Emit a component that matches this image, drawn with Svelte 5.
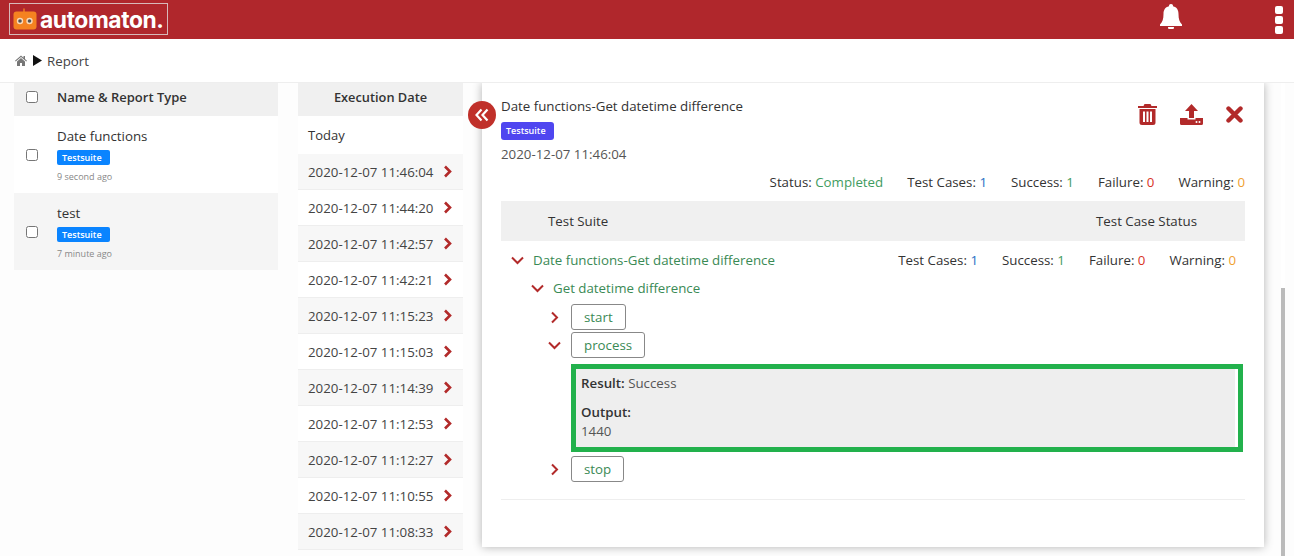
<script>
  const dates = ['11:46:04','11:44:20','11:42:57','11:42:21','11:15:23','11:15:03','11:14:39','11:12:53','11:12:27','11:10:55','11:08:33'];
  const reports = [
    { name: 'Date functions', ago: '9 second ago' },
    { name: 'test', ago: '7 minute ago' }
  ];
</script>

<svelte:head><title>Report</title></svelte:head>

<div class="page">
  <header class="top">
    <div class="logo">
      <svg width="24" height="22" viewBox="0 0 24 22">
        <path d="M11 5 L11 .5" stroke="#f58220" stroke-width="1.400"/>
        <rect x="0.500" y="3.500" width="23" height="18" rx="3" fill="#f58220"/>
        <circle cx="7" cy="13" r="3.200" fill="#f9d9b8"/><circle cx="7" cy="13" r="1.800" fill="#555"/>
        <circle cx="16.500" cy="13" r="3.200" fill="#f9d9b8"/><circle cx="16.500" cy="13" r="1.800" fill="#555"/>
      </svg>
      <span>automaton.</span>
    </div>
    <svg class="bell" width="24" height="25" viewBox="0 0 24 25"><path fill="#fff" d="M12 0a2 2 0 0 1 2 2.300c4 .9 5.500 4 5.500 7.700 0 5 1 8 3.500 10.500V22H1v-1.500C3.500 18 4.500 15 4.500 10c0-3.700 1.500-6.800 5.500-7.700A2 2 0 0 1 12 0zM9 23h6a3 3 0 0 1-6 0z"/></svg>
    <div class="dots"><i></i><i></i><i></i></div>
  </header>

  <nav class="crumb">
    <svg width="12" height="11" viewBox="0 0 12 11"><path fill="#777" d="M6 .5 0 5.800l.7.700L6 2l5.300 4.500.7-.7-2-1.800V1H8.500v1.700zM2 6.500V11h3V8h2v3h3V6.500L6 3z"/></svg>
    <svg width="9" height="11" viewBox="0 0 9 11"><path fill="#111" d="M0 0 9 5.500 0 11z"/></svg>
    <span>Report</span>
  </nav>

  <main class="main">
    <section class="list">
      <div class="list-head"><input type="checkbox" /><b>Name &amp; Report Type</b></div>
      {#each reports as r, i}
        <div class="report" class:alt={i === 1}>
          <input type="checkbox" />
          <div class="report-info">
            <div class="report-name">{r.name}</div>
            <span class="badge blue">Testsuite</span>
            <div class="ago">{r.ago}</div>
          </div>
        </div>
      {/each}
    </section>

    <section class="dates">
      <div class="dates-head">Execution Date</div>
      <div class="today">Today</div>
      {#each dates as d, i}
        <div class="date" class:alt={i % 2 === 0}>
          <span>2020-12-07 {d}</span>
          <svg class="chev" width="9" height="13" viewBox="0 0 9 13"><path d="M2 1.500 7 6.500 2 11.500" fill="none" stroke="#b22a2a" stroke-width="2.600"/></svg>
        </div>
      {/each}
    </section>

    <section class="panel">
      <button class="collapse" aria-label="collapse">
        <svg width="16" height="14" viewBox="0 0 16 14"><path d="M7.500 1.500 2.500 7l5 5.500M13.500 1.500 8.500 7l5 5.500" fill="none" stroke="#fff" stroke-width="2.200"/></svg>
      </button>
      <div class="panel-top">
        <div>
          <div class="title">Date functions-Get datetime difference</div>
          <span class="badge purple">Testsuite</span>
          <div class="stamp">2020-12-07 11:46:04</div>
        </div>
        <div class="actions">
          <svg width="19" height="21" viewBox="0 0 19 21"><path fill="#b22a2a" d="M6.500 0h6l1 2H19v2H0V2h5.500zM1.500 5h16v13.500a2.500 2.500 0 0 1-2.500 2.500H4a2.500 2.500 0 0 1-2.500-2.500zM5 7.500v10.500h2V7.500zm3.500 0v10.500h2V7.500zm3.500 0v10.500h2V7.500z"/></svg>
          <svg width="23" height="21" viewBox="0 0 23 21"><path fill="#b22a2a" d="M11.500 0 18 7h-4v7H9V7H5zM0 14h7.500v1.500h8V14H23v5.500a1.500 1.500 0 0 1-1.500 1.500h-20A1.500 1.500 0 0 1 0 19.500z"/><circle cx="16.500" cy="18" r="1" fill="#fff"/><circle cx="19.500" cy="18" r="1" fill="#fff"/></svg>
          <svg width="17" height="17" viewBox="0 0 17 17"><path d="M2.500 2.500l12 12M14.500 2.500l-12 12" stroke="#b22a2a" stroke-width="4.400" stroke-linecap="round"/></svg>
        </div>
      </div>

      <div class="stats summary">
        <span>Status: <em class="g">Completed</em></span>
        <span>Test Cases: <em class="bl">1</em></span>
        <span>Success: <em class="g">1</em></span>
        <span>Failure: <em class="r">0</em></span>
        <span>Warning: <em class="o">0</em></span>
      </div>

      <div class="table-head"><span>Test Suite</span><span>Test Case Status</span></div>

      <div class="tree">
        <div class="suite-row">
          <svg class="down" width="13" height="9" viewBox="0 0 13 9"><path d="M1 1.500 6.500 7 12 1.500" fill="none" stroke="#b22a2a" stroke-width="2"/></svg>
          <span class="green">Date functions-Get datetime difference</span>
          <div class="stats">
            <span>Test Cases: <em class="bl">1</em></span>
            <span>Success: <em class="g">1</em></span>
            <span>Failure: <em class="r">0</em></span>
            <span>Warning: <em class="o">0</em></span>
          </div>
        </div>
        <div class="case-row">
          <svg class="down" width="13" height="9" viewBox="0 0 13 9"><path d="M1 1.500 6.500 7 12 1.500" fill="none" stroke="#b22a2a" stroke-width="2"/></svg>
          <span class="green">Get datetime difference</span>
        </div>
        <div class="steps">
          <div class="step">
            <svg width="9" height="13" viewBox="0 0 9 13"><path d="M2 1.500 7 6.500 2 11.500" fill="none" stroke="#b22a2a" stroke-width="2"/></svg>
            <span class="pill">start</span>
          </div>
          <div class="step">
            <svg width="13" height="9" viewBox="0 0 13 9"><path d="M1 1.500 6.500 7 12 1.500" fill="none" stroke="#b22a2a" stroke-width="2"/></svg>
            <span class="pill">process</span>
          </div>
        </div>
        <div class="result">
          <div class="result-inner">
            <div><b>Result:</b> Success</div>
            <div class="output"><b>Output:</b><br />1440</div>
          </div>
        </div>
        <div class="step stop">
          <svg width="9" height="13" viewBox="0 0 9 13"><path d="M2 1.500 7 6.500 2 11.500" fill="none" stroke="#b22a2a" stroke-width="2"/></svg>
          <span class="pill">stop</span>
        </div>
      </div>
    </section>

    <div class="scrollbar"><div class="thumb"></div></div>
  </main>
</div>

<style>
  :global(body) { margin: 0; background: #fff; }
  .page { width: 1294px; height: 556px; overflow: hidden; display: flex; flex-direction: column; font-family: "Open Sans", sans-serif; font-size: 13.300px; color: #333; }
  .top { height: 39px; flex: none; background: #b0272c; display: flex; align-items: center; padding-left: 9px; box-sizing: border-box; }
  .logo { height: 32px; width: 159px; box-sizing: border-box; border: 1px solid #d8b9b9; display: flex; align-items: center; gap: 3px; padding-left: 3px; margin-top: -1px; }
  .logo span { font-family: "Inter", sans-serif; font-weight: 700; font-size: 22.800px; letter-spacing: -0.4px; color: #fff; }
  .bell { margin-left: auto; margin-right: 92px; margin-top: -7px; }
  .dots { display: flex; flex-direction: column; gap: 2px; margin-right: 11px; }
  .dots i { width: 8px; height: 8px; background: #fff; border-radius: 2px; }
  .crumb { position: relative; z-index: 2; height: 44px; flex: none; box-sizing: border-box; display: flex; align-items: center; gap: 6px; padding-left: 15px; border-bottom: 1px solid #eee; color: #444; background: #fff; }
  .crumb span { margin-left: -1px; }
  .main { flex: 1; min-height: 0; display: flex; align-items: flex-start; padding-left: 14px; background: #fdfdfd; }
  .list { width: 264px; flex: none; }
  .list-head { height: 33px; box-sizing: border-box; padding-bottom: 6px; background: #f0f0f0; display: flex; align-items: center; }
  .list-head input, .report input { margin: 0 0 0 12px; width: 12px; height: 12px; }
  .list-head b { font-weight: 600; font-size: 13px; margin-left: 19px; }
  .report { height: 77px; background: #fff; display: flex; align-items: center; box-sizing: border-box; }
  .report.alt { background: #f5f5f5; }
  .report-info { margin-left: 19px; }
  .report-name { line-height: 18px; color: #333; }
  .badge { display: inline-block; box-sizing: border-box; height: 15px; line-height: 15px; padding: 0 5px; border-radius: 2px; color: #fff; font-size: 9px; font-weight: 600; }
  .badge.blue { background: #0a84ff; margin-top: 5px; display: block; width: 53px; }
  .badge.purple { background: #4f46f0; height: 18px; line-height: 18px; width: 53px; display: block; margin-top: 7px; border-radius: 3px; }
  .ago { font-size: 9px; color: #888; margin-top: 6px; line-height: 12px; }
  .dates { width: 165px; flex: none; margin-left: 20px; }
  .dates-head { height: 33px; background: #f0f0f0; text-align: center; line-height: 29px; font-weight: 600; font-size: 12.800px; }
  .today { height: 38px; line-height: 38px; padding-left: 10px; background: #fff; font-size: 13px; font-weight: 500; }
  .date { height: 36px; display: flex; align-items: center; justify-content: space-between; padding: 0 11px 0 10px; background: #fff; border-bottom: 1px solid #eee; box-sizing: border-box; color: #444; }
  .date.alt { background: #f7f7f7; }
  .panel { position: relative; width: 782px; height: 464px; flex: none; margin-left: 19px; box-sizing: border-box; padding: 0 19px; background: #fff; box-shadow: 0 0 9px rgba(0,0,0,.3); }
  .collapse { position: absolute; left: -14px; top: 18px; width: 28px; height: 28px; border: 0; border-radius: 50%; padding: 0; background: #c0302a; display: flex; align-items: center; justify-content: center; }
  .panel-top { display: flex; justify-content: space-between; padding-top: 14px; height: 73px; }
  .title { line-height: 18px; color: #333; }
  .stamp { color: #555; line-height: 18px; margin-top: 5px; }
  .actions { display: flex; align-items: center; gap: 23px; height: 22px; margin-top: 6px; margin-right: 2px; }
  .stats { display: flex; gap: 24px; color: #333; }
  .stats em { font-style: normal; }
  .summary { justify-content: flex-end; height: 24px; align-items: center; }
  .g { color: #3f9c5f; } .bl { color: #2b6fc4; } .r { color: #d9341f; } .o { color: #f0a030; }
  .table-head { height: 40px; margin-top: 7px; background: #f0f0f0; display: flex; justify-content: space-between; align-items: center; padding: 0 48px 0 47px; font-weight: 500; }
  .tree { border-bottom: 1px solid #eee; height: 259px; box-sizing: border-box; }
  .green { color: #3a8a55; font-weight: 500; }
  .suite-row { height: 38px; display: flex; align-items: center; padding-left: 10px; gap: 9px; }
  .suite-row .stats { margin-left: auto; margin-right: 9px; }
  .case-row { height: 18px; display: flex; align-items: center; padding-left: 30px; gap: 9px; }
  .steps { padding-top: 6px; }
  .step { display: flex; align-items: center; height: 28px; padding-left: 48px; }
  .step svg { width: 13px; margin-right: 10px; margin-left: -1px; }
  .pill { border: 1px solid #888; border-radius: 3px; padding: 0 12px; height: 24px; line-height: 24px; color: #3a8a55; font-weight: 500; }
  .result { margin: 5px 2px 0 70px; border: 5px solid #22b14c; height: 88px; box-sizing: border-box; }
  .result-inner { height: 100%; box-sizing: border-box; margin-right: 3px; background: #eee; padding: 5px; color: #555; line-height: 19px; }
  .result-inner b { font-weight: 600; color: #333; }
  .output { margin-top: 10px; }
  .stop { margin-top: 3px; }
  .scrollbar { width: 4px; height: 473px; margin-left: 17px; position: relative; background: #fff; }
  .thumb { position: absolute; top: 205px; bottom: 0; left: 0; right: 0; background: #bbb; }
</style>
